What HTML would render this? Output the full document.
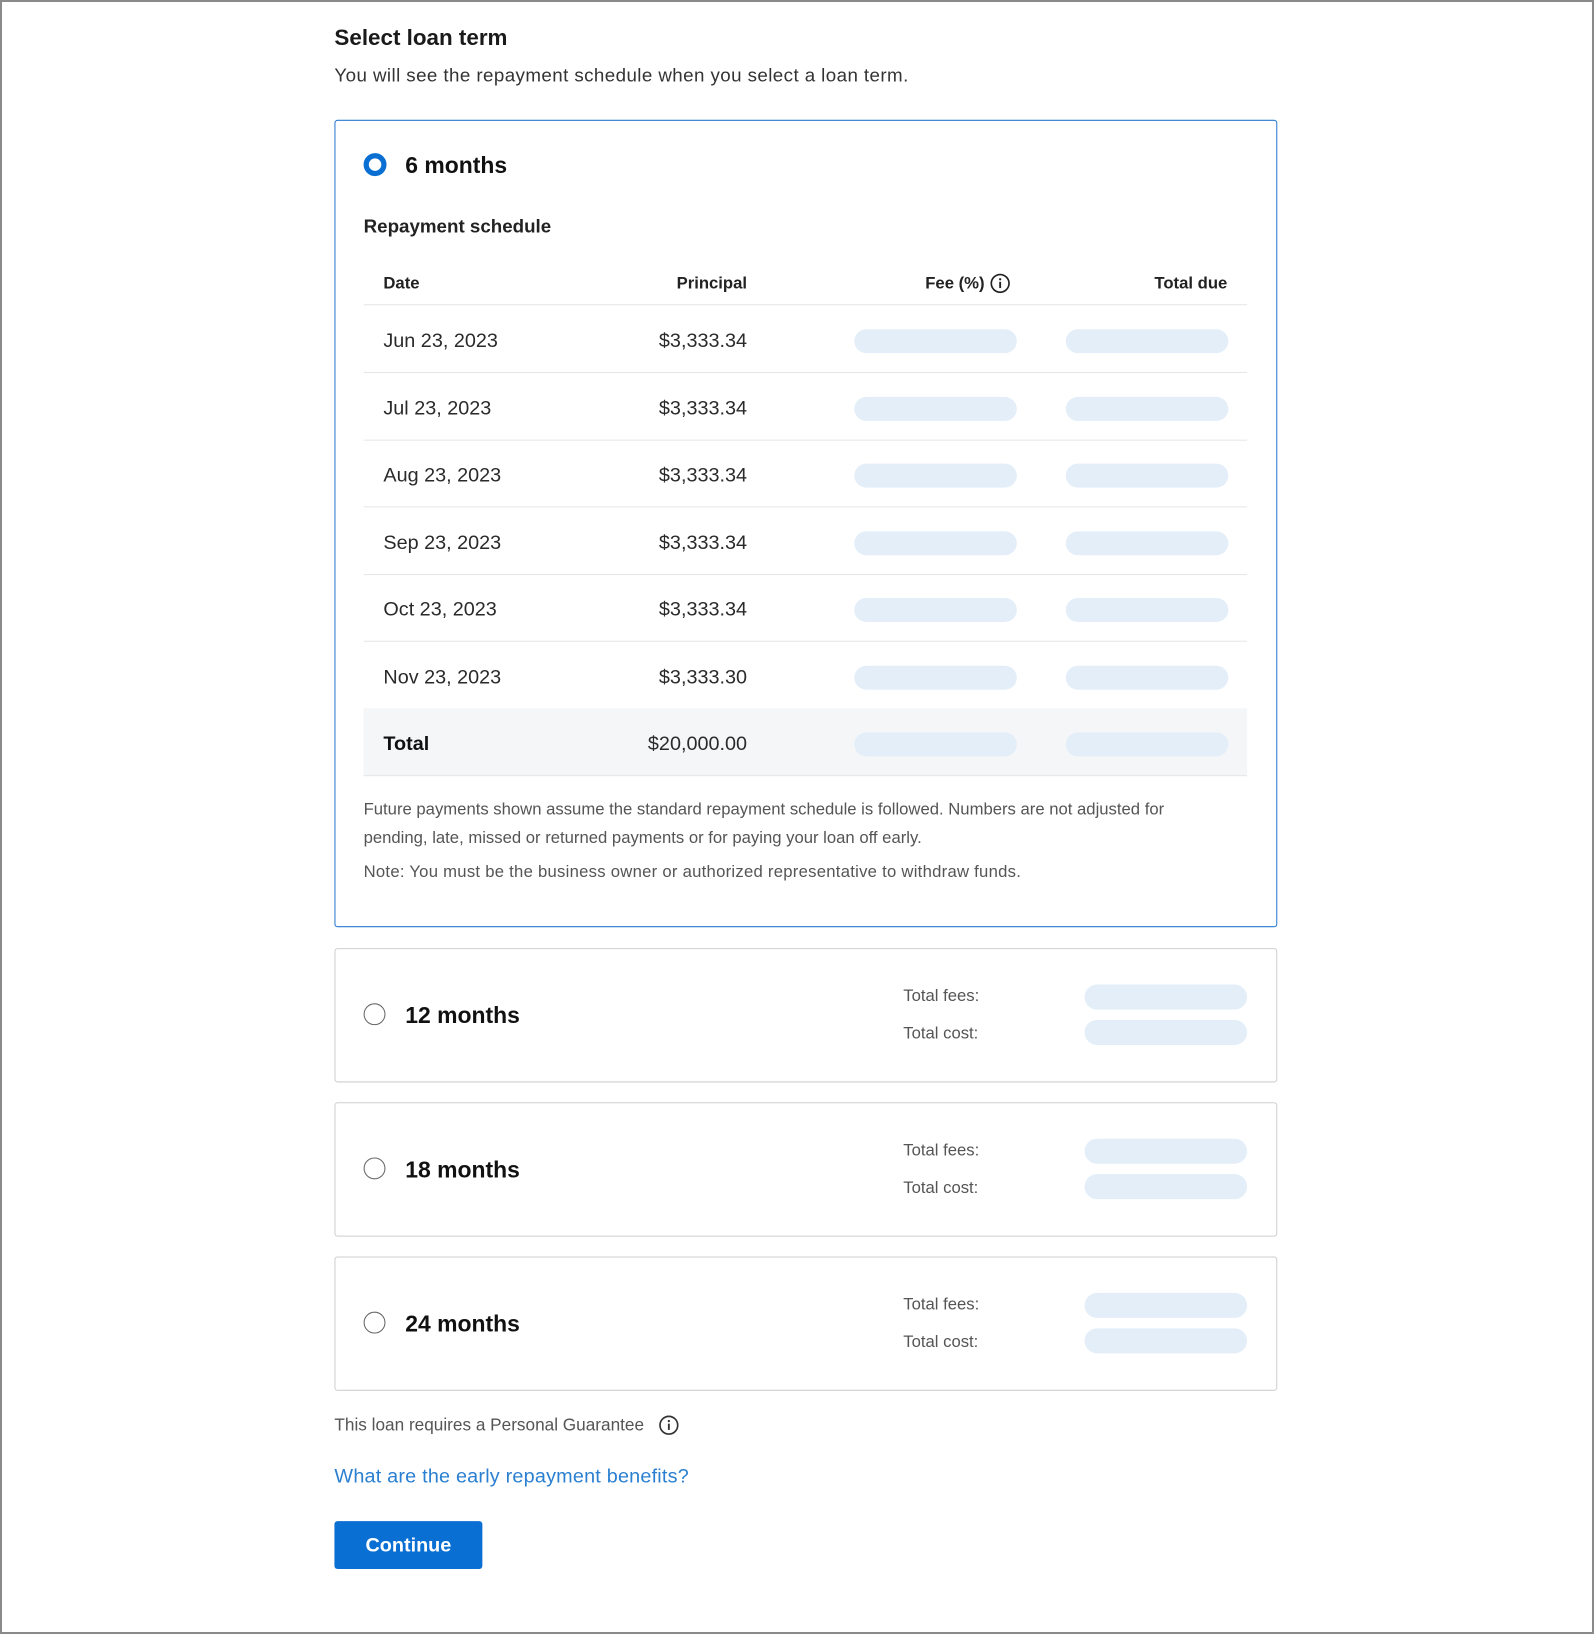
<!DOCTYPE html>
<html><head><meta charset="utf-8"><style>
html,body{margin:0;padding:0;background:#fff;}
body{width:1594px;height:1634px;position:relative;overflow:hidden;font-family:"Liberation Sans",Arial,sans-serif;color:#1a1a1a;}
#frame{position:absolute;left:0;top:0;width:1590px;height:1630px;border:2px solid #8a8a8a;}
#s{position:absolute;left:0;top:0;width:1530px;height:1568px;transform:scale(1.04183);transform-origin:0 0;}
.a{position:absolute;white-space:nowrap;}
.box{position:absolute;left:321px;width:903px;border:1px solid #cfcfcf;border-radius:3px;background:#fff;}
.pill{position:absolute;height:23px;border-radius:12px;background:#e3eef9;}
.row{position:absolute;left:349px;width:848px;height:64px;border-bottom:1px solid #e6e6e6;}
.row .d{position:absolute;left:19px;top:3px;line-height:64px;font-size:19px;color:#2a2a2a;}
.row .p{position:absolute;right:480px;top:3px;line-height:64px;font-size:19px;color:#2a2a2a;}
.row .pill{top:23px;}
.radio{position:absolute;width:19px;height:19px;border:1.5px solid #666;border-radius:50%;}
.lbl{font-size:16px;color:#555;}
.big{font-size:22px;font-weight:bold;color:#111;}
</style></head><body>
<div id="frame"></div>
<div id="s">
<div class="a" style="left:321px;top:24px;font-size:21.5px;font-weight:bold;">Select loan term</div>
<div class="a" style="left:321px;top:62px;font-size:18px;color:#333;letter-spacing:0.4px;">You will see the repayment schedule when you select a loan term.</div>

<div class="box" style="top:115px;height:773px;border:1.5px solid #2b7ad0;"></div>
<div class="a" style="left:349px;top:147px;width:12px;height:12px;border:5px solid #0a6fd3;border-radius:50%;"></div>
<div class="a big" style="left:389px;top:146px;">6 months</div>
<div class="a" style="left:349px;top:207px;font-size:18px;font-weight:bold;color:#222;">Repayment schedule</div>

<div class="a" style="left:349px;top:262px;width:848px;height:30px;border-bottom:1px solid #e6e6e6;font-size:16px;font-weight:bold;color:#222;">
 <span style="position:absolute;left:19px;top:2px;">Date</span>
 <span style="position:absolute;right:480px;top:2px;">Principal</span>
 <span style="position:absolute;right:252px;top:2px;">Fee (%)</span>
 <svg style="position:absolute;left:601px;top:0px" width="20" height="20" viewBox="0 0 20 20"><circle cx="10" cy="10" r="8.5" fill="none" stroke="#222" stroke-width="1.6"/><rect x="9.1" y="8.5" width="1.8" height="6" fill="#222"/><circle cx="10" cy="6" r="1.1" fill="#222"/></svg>
 <span style="position:absolute;right:19px;top:2px;">Total due</span>
</div>

<div class="row" style="top:293px;"><span class="d">Jun 23, 2023</span><span class="p">$3,333.34</span><div class="pill" style="left:471px;width:156px"></div><div class="pill" style="left:674px;width:156px"></div></div>
<div class="row" style="top:358px;"><span class="d">Jul 23, 2023</span><span class="p">$3,333.34</span><div class="pill" style="left:471px;width:156px"></div><div class="pill" style="left:674px;width:156px"></div></div>
<div class="row" style="top:422px;"><span class="d">Aug 23, 2023</span><span class="p">$3,333.34</span><div class="pill" style="left:471px;width:156px"></div><div class="pill" style="left:674px;width:156px"></div></div>
<div class="row" style="top:487px;"><span class="d">Sep 23, 2023</span><span class="p">$3,333.34</span><div class="pill" style="left:471px;width:156px"></div><div class="pill" style="left:674px;width:156px"></div></div>
<div class="row" style="top:551px;"><span class="d">Oct 23, 2023</span><span class="p">$3,333.34</span><div class="pill" style="left:471px;width:156px"></div><div class="pill" style="left:674px;width:156px"></div></div>
<div class="row" style="top:616px;"><span class="d">Nov 23, 2023</span><span class="p">$3,333.30</span><div class="pill" style="left:471px;width:156px"></div><div class="pill" style="left:674px;width:156px"></div></div>
<div class="row" style="top:680px;background:#f5f6f8;"><span class="d" style="font-weight:bold;color:#111;">Total</span><span class="p">$20,000.00</span><div class="pill" style="left:471px;width:156px"></div><div class="pill" style="left:674px;width:156px"></div></div>

<div class="a lbl" style="left:349px;top:764px;line-height:27px;white-space:normal;width:826px;">Future payments shown assume the standard repayment schedule is followed. Numbers are not adjusted for pending, late, missed or returned payments or for paying your loan off early.</div>
<div class="a lbl" style="left:349px;top:829px;letter-spacing:0.25px;">Note: You must be the business owner or authorized representative to withdraw funds.</div>

<div class="box" style="top:910px;height:127px;"></div>
<div class="radio" style="left:349px;top:963px;"></div>
<div class="a big" style="left:389px;top:962px;">12 months</div>
<div class="a lbl" style="left:867px;top:948px;">Total fees:</div>
<div class="a lbl" style="left:867px;top:984px;">Total cost:</div>
<div class="pill" style="left:1041px;top:945px;width:156px;height:24px;"></div>
<div class="pill" style="left:1041px;top:979px;width:156px;height:24px;"></div>

<div class="box" style="top:1058px;height:127px;"></div>
<div class="radio" style="left:349px;top:1111px;"></div>
<div class="a big" style="left:389px;top:1110px;">18 months</div>
<div class="a lbl" style="left:867px;top:1096px;">Total fees:</div>
<div class="a lbl" style="left:867px;top:1132px;">Total cost:</div>
<div class="pill" style="left:1041px;top:1093px;width:156px;height:24px;"></div>
<div class="pill" style="left:1041px;top:1127px;width:156px;height:24px;"></div>

<div class="box" style="top:1206px;height:127px;"></div>
<div class="radio" style="left:349px;top:1259px;"></div>
<div class="a big" style="left:389px;top:1258px;">24 months</div>
<div class="a lbl" style="left:867px;top:1244px;">Total fees:</div>
<div class="a lbl" style="left:867px;top:1280px;">Total cost:</div>
<div class="pill" style="left:1041px;top:1241px;width:156px;height:24px;"></div>
<div class="pill" style="left:1041px;top:1275px;width:156px;height:24px;"></div>

<div class="a" style="left:321px;top:1359px;font-size:16.5px;color:#555;">This loan requires a Personal Guarantee</div>
<svg class="a" style="left:632px;top:1358px" width="20" height="20" viewBox="0 0 20 20"><circle cx="10" cy="10" r="8.5" fill="none" stroke="#333" stroke-width="1.6"/><rect x="9.1" y="8.5" width="1.8" height="6" fill="#333"/><circle cx="10" cy="6" r="1.1" fill="#333"/></svg>
<div class="a" style="left:321px;top:1407px;font-size:19px;color:#2a7fd0;letter-spacing:0.2px;">What are the early repayment benefits?</div>
<div class="a" style="left:321px;top:1460px;width:142px;height:46px;background:#0a6fd3;border-radius:3px;color:#fff;font-size:19px;font-weight:bold;text-align:center;line-height:47px;">Continue</div>
</div>
</body></html>
